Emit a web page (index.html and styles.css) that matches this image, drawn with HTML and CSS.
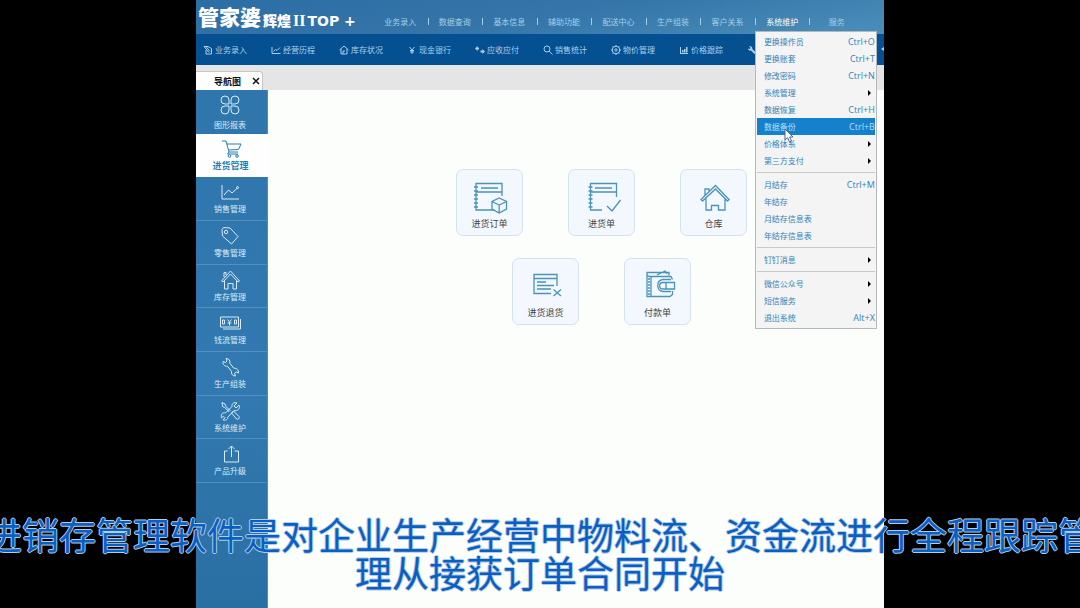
FILE: index.html
```html
<!DOCTYPE html>
<html lang="zh-CN">
<head>
<meta charset="utf-8">
<title>管家婆辉煌II TOP+</title>
<link rel="stylesheet" href="styles.css">
</head>
<body>
<div class="stage">
  <div class="app">
    <header class="header">
      <h1 class="logo"><span class="logo-main">管家婆</span><span class="logo-sub">辉煌</span><span class="logo-num">II</span><span class="logo-top">TOP +</span></h1>
      <nav class="topnav">
        <div class="topnav-item"><button>业务录入</button></div>
        <div class="topnav-item"><button>数据查询</button></div>
        <div class="topnav-item"><button>基本信息</button></div>
        <div class="topnav-item"><button>辅助功能</button></div>
        <div class="topnav-item"><button>配送中心</button></div>
        <div class="topnav-item"><button>生产组装</button></div>
        <div class="topnav-item"><button>客户关系</button></div>
        <div class="topnav-item current"><button>系统维护</button>
          <div class="menu">
            <div class="menu-group">
              <button class="menu-item">更换操作员<kbd>Ctrl+O</kbd></button>
              <button class="menu-item">更换账套<kbd>Ctrl+T</kbd></button>
              <button class="menu-item">修改密码<kbd>Ctrl+N</kbd></button>
              <button class="menu-item more">系统管理</button>
              <button class="menu-item">数据恢复<kbd>Ctrl+H</kbd></button>
              <button class="menu-item selected">数据备份<kbd>Ctrl+B</kbd></button>
              <button class="menu-item more">价格体系</button>
              <button class="menu-item more">第三方支付</button>
            </div>
            <div class="menu-group">
              <button class="menu-item">月结存<kbd>Ctrl+M</kbd></button>
              <button class="menu-item">年结存</button>
              <button class="menu-item">月结存信息表</button>
              <button class="menu-item">年结存信息表</button>
            </div>
            <div class="menu-group">
              <button class="menu-item more">钉钉消息</button>
            </div>
            <div class="menu-group">
              <button class="menu-item more">微信公众号</button>
              <button class="menu-item more">短信服务</button>
              <button class="menu-item">退出系统<kbd>Alt+X</kbd></button>
            </div>
            <svg class="cursor" viewBox="0 0 10 15"><path d="M1 1v11l2.600-2.400L5.500 14l2-.9-1.900-4.100H9z" fill="#fff" stroke="#4a6a88" stroke-width="1"/></svg>
          </div>
        </div>
        <div class="topnav-item"><button>服务</button></div>
      </nav>
    </header>

    <div class="toolbar">
      <button class="tool"><svg viewBox="0 0 10 10"><path d="M1 1.500h4l3.500 2v5.500H3V5M1 1.500l5 6M3 1.500l4 5"/></svg>业务录入</button>
      <button class="tool"><svg viewBox="0 0 10 10"><path d="M1 2v6.500h8.500M2.500 6.500l2-2 1.500 1 3-3"/></svg>经营历程</button>
      <button class="tool"><svg viewBox="0 0 10 10"><path d="M0.500 5L5 1l4.500 4M2 4v5h6V4M4 9V6h2"/></svg>库存状况</button>
      <button class="tool"><svg viewBox="0 0 10 10"><path d="M2.500 2L5 5l2.500-3M5 5v4M3 5.500h4M3 7h4"/></svg>现金银行</button>
      <button class="tool"><svg viewBox="0 0 10 10"><path class="solid" d="M0 3.500L2.500 1v1.500H4v2H2.500V6zM10 6.500L7.500 4v1.500H5.500v2h2V9z"/></svg>应收应付</button>
      <button class="tool"><svg viewBox="0 0 10 10"><circle cx="4" cy="4" r="3"/><path d="M6.200 6.200L9.500 9.500"/></svg>销售统计</button>
      <button class="tool"><svg viewBox="0 0 10 10"><circle cx="5" cy="5" r="3.800"/><circle cx="5" cy="5" r="1.200"/><path d="M5 0v1.500M5 8.500V10M0 5h1.500M8.500 5H10M1.500 1.500l1 1M7.500 7.500l1 1M1.500 8.500l1-1M7.500 2.500l1-1"/></svg>物价管理</button>
      <button class="tool"><svg viewBox="0 0 10 10"><path class="solid" d="M1 2h1v6h7v1H1zM3 5h1.500v2.500H3zM5 4h1.500v3.500H5zM7 2h1.500v5.500H7z"/></svg>价格跟踪</button>
      <button class="tool" aria-label="工具"><svg viewBox="0 0 10 10"><path class="solid" d="M1 3.500l2 .5.500-1.500L2 1.500c2-.8 3.800.5 3.300 2.500L9 7.500 7.500 9 4 5.500C2.500 6 1 5 1 3.500z"/></svg></button>
      <button class="tool tool-end" aria-label="更多"><svg viewBox="0 0 10 10"><path class="solid" d="M0 4l3-2v4z"/></svg></button>
    </div>

    <div class="tabs">
      <div class="tab"><span>导航图</span><button class="tab-close" aria-label="关闭"><svg viewBox="0 0 8 8"><path d="M1 1l6 6M7 1L1 7"/></svg></button></div>
    </div>

    <div class="body">
      <nav class="sidebar">
        <div class="side-list">
        <button class="side first"><svg viewBox="0 0 22 22"><path d="M10 10H6a4 4 0 1 1 4-4zM12 10V6a4 4 0 1 1 4 4zM10 12v4a4 4 0 1 1-4-4zM12 12h4a4 4 0 1 1-4 4z"/></svg>图形报表</button>
        <button class="side active"><svg viewBox="0 0 22 22"><path d="M2 3h4l3 11h9M6.500 6H21l-2.500 5.500-10 .5M9 14l-1.500 2H18"/><circle cx="9.500" cy="18" r="1.300"/><circle cx="17" cy="18" r="1.300"/></svg>进货管理</button>
        <button class="side"><svg viewBox="0 0 22 22"><path d="M3 4v14h17M5 14l4.500-5 3.500 3 5.500-5"/><circle cx="18.500" cy="6.500" r="1"/></svg>销售管理</button>
        <button class="side"><svg viewBox="0 0 22 22"><path d="M3 4.500l1.500-2L11 3l8 8.500-6.500 7.500L3.500 11z"/><circle cx="7" cy="7" r="1.700"/></svg>零售管理</button>
        <button class="side"><svg viewBox="0 0 22 22"><path d="M2.500 12L11.500 2l9 10-1.500 1-7.500-8L4 13zM5.500 11.500V20H9v-5.500h5V20h3.500v-8.500M5 8V3.500h2V6"/></svg>库存管理</button>
        <button class="side"><svg viewBox="0 0 22 22"><path d="M1.500 5h18v10h-18zM4 17h17.500V7M3.500 8h2v4h-2zM15.500 8h2v4h-2z"/><path d="M8.500 7.500l2 2.500 2-2.500M10.500 10v3.500M8.500 11h4"/></svg>钱流管理</button>
        <button class="side"><svg viewBox="0 0 22 22"><path d="M4 5.500l2.500 1 1.500-1.500L7 2.500c3 0 4.500 2 3.800 4.700l4 5C17.500 12 20 14 19.500 17l-2.300-1-1.700 1.500 1 2.500c-3 0-4.600-2-4-4.600l-4-5.100C5.500 10.500 3.500 8.500 4 5.500z"/></svg>生产组装</button>
        <button class="side"><svg viewBox="0 0 22 22"><path d="M3 2.500l3 1.500 1 2.500 4 4-1 1-4.300-4L3.500 6.500zM12.500 13l2-2 5.500 5.500c1 2-1 3.500-2.500 2.500zM18 3l-3 3 2 2 3-3c1.500 3.500-1.500 6.500-5 5.500l-6.500 7c1 2-2.500 3.500-4.500 2.300l2-2-1.500-1.500-2 1.500C1.500 14 4 12 6.500 13l6.500-6.500C12.500 3.500 15 2 18 3z"/></svg>系统维护</button>
        <button class="side"><svg viewBox="0 0 22 22"><path d="M8.500 8H5.500v11h14V8h-4M12.500 14V3M9.500 6l3-3 3 3"/></svg>产品升级</button>
        </div>
      </nav>

      <main class="content">
        <div class="cards">
          <div class="card-row">
            <button class="card"><svg viewBox="0 0 67 47"><path d="M46 26V13.500H20V40h18.500M20 22h26M25 18h17M18 17h4M18 21h4M18 25h4M18 29h4M18 33h4M18 37h4"/><path d="M43.200 28l7.300 3.500v7.500l-7.300 4-7.200-4v-7.500zM36 31.500l7.200 3.500 7.300-3.500M43.200 35v8"/></svg>进货订单</button>
            <button class="card"><svg viewBox="0 0 67 47"><path d="M48.500 27V13.500h-26V40H34M22.500 22h26M27 18h17M20.500 17h4M20.500 21h4M20.500 25h4M20.500 29h4M20.500 33h4M20.500 37h4"/><path d="M39 36l5 5 8.500-11"/></svg>进货单</button>
            <button class="card"><svg viewBox="0 0 67 47"><path d="M21 29.500L35.500 15.500 49 29.500l-1.500 1.500-12-12-13 12zM26 28.500V40h5.500v-4.500h7V40H45V28.500M25 25v-6h4v3"/></svg>仓库</button>
          </div>
          <div class="card-row">
            <button class="card"><svg viewBox="0 0 67 47"><path d="M45 27V15.500H22v19h17M22 19.500h23M25 23h9M25 26.500h17M25 30h14M41.500 30.500l7.500 6.500M49 30.500L41.500 37"/></svg>进货退货</button>
            <button class="card"><svg viewBox="0 0 67 47"><path d="M23 14v23.500h23l2.500-2V32M48.500 20.500L47 17.500H25L23 16v-2.500h22v3M27 18v19M24 20h2M24 23h2M24 26h2M24 29h2M24 32h2M24 35h2M33 16l8-4 2 3"/><path d="M50.500 23.500H39c-4.500 0-4.500 6.500 0 6.500h11.500zM47 20.500h-8c-7 1-7 11 0 12h8M42 23.500V30"/></svg>付款单</button>
          </div>
        </div>
      </main>
    </div>
  </div>
  <p class="caption">进销存管理软件是对企业生产经营中物料流、资金流进行全程跟踪管<br>理从接获订单合同开始</p>
</div>
</body>
</html>
```

FILE: styles.css
```css
* { box-sizing: border-box; }

body {
  margin: 0;
  background: #000;
  font-family: "Noto Sans", "Noto Sans CJK SC", sans-serif;
  font-size: 8px;
}

button {
  margin: 0;
  padding: 0;
  border: 0;
  background: none;
  color: inherit;
  font: inherit;
  white-space: nowrap;
}

svg {
  fill: none;
  stroke: currentColor;
  stroke-width: 1;
  flex: none;
}

.solid { fill: currentColor; stroke: none; }

.stage {
  position: relative;
  min-height: 100vh;
  padding: 0 18.150%;
  overflow: hidden;
}

.app {
  display: flex;
  flex-direction: column;
  min-height: 100vh;
  background: #fcfefc;
}

/* Header */
.header {
  display: flex;
  height: 34px;
  padding-right: 20px;
  background: linear-gradient(170deg, #2c6da4 0%, #3575a9 50%, #4a8fba 100%);
}

.logo {
  display: flex;
  flex: 0 0 177px;
  align-items: center;
  margin: 0;
  padding: 4px 0 0 2px;
  color: #fff;
  font-weight: 900;
  line-height: 24px;
  white-space: nowrap;
}

.logo-main { font-size: 21px; padding-bottom: 4px; }
.logo-sub { margin-left: 2px; font-size: 14px; padding-top: 3px; }
.logo-num { margin: 0 2px; padding-top: 3px; font: 700 16px/24px "Liberation Serif", serif; }
.logo-top { padding-top: 3px; font: 700 14px/24px "DejaVu Sans", sans-serif; }

.topnav {
  display: grid;
  flex: 1;
  grid-template-columns: repeat(9, 1fr);
  color: #a3cfe8;
}

.topnav-item {
  position: relative;
  display: flex;
  align-items: center;
  justify-content: center;
  padding-top: 8px;
}

.topnav-item + .topnav-item::before {
  content: "";
  position: absolute;
  left: 0;
  top: 18px;
  width: 1px;
  height: 7px;
  background: #a3cfe8;
}

.current > button { color: #fff; }

/* Drop-down menu */
.menu {
  position: absolute;
  z-index: 2;
  left: 0;
  top: 31px;
  width: 122px;
  padding: 1px 1px 2px;
  border: 1px solid #b4b8bb;
  background: #f4f4f5;
  color: #2f83ba;
}

.menu-group + .menu-group {
  margin-top: 3px;
  padding-top: 3px;
  border-top: 1px solid #c8cacb;
}

.menu-item {
  display: flex;
  align-items: center;
  justify-content: space-between;
  width: 100%;
  height: 17px;
  padding-left: 7px;
}

.menu-item kbd { font: 9px "Open Sans", sans-serif; }

.more::after {
  content: "";
  margin-right: 4px;
  border: 3px solid transparent;
  border-left: 3px solid #000;
  border-right: 0;
}

.selected { background: #1580cb; color: #b9def5; }

.cursor {
  position: absolute;
  left: 28px;
  top: 96px;
  width: 10px;
  height: 15px;
}

/* Toolbar */
.toolbar {
  display: flex;
  height: 31px;
  padding-left: 7px;
  overflow: hidden;
  background: #045091;
  color: #a9d0ea;
}

.tool {
  display: flex;
  flex: 0 0 68px;
  align-items: center;
  gap: 2px;
}

.tool svg { width: 10px; height: 10px; }
.tool-end { flex: 0 0 3px; margin-left: auto; overflow: hidden; }

/* Tabs */
.tabs {
  display: flex;
  align-items: flex-end;
  height: 25px;
  background: #e5e5e6;
}

.tab {
  display: flex;
  align-items: center;
  justify-content: space-between;
  width: 67px;
  height: 19px;
  padding: 0 2px 0 18px;
  border: 1px solid #c3c5c7;
  border-width: 1px 1px 0 0;
  border-radius: 0 4px 0 0;
  background: #fdfefd;
  color: #111;
  font-size: 9px;
  font-weight: 700;
}

.tab-close svg { display: block; width: 8px; height: 8px; stroke-width: 1.5; }

/* Body */
.body { display: flex; flex: 1; }

.sidebar {
  flex: 0 0 72px;
  border-right: 1px solid #4d8dbb;
  background: linear-gradient(#2f76ad, #3179b0 60%, #2a6fa2);
  color: #d8ecf8;
}

.side-list {
  display: grid;
  grid-auto-rows: 1fr;
  height: 393px;
}

.side {
  display: flex;
  flex-direction: column;
  align-items: center;
  padding: 4px 3px 0 0;
  border-bottom: 1px solid #4f90c0;
  line-height: 12px;
}

.side svg { width: 22px; height: 22px; }

.first { gap: 3px; border-bottom: 0; }

.active {
  margin-right: -1px;
  border-bottom: 0;
  background: #fdfefd;
  color: #2a7fb5;
  font-size: 9px;
  font-weight: 700;
}

.content { flex: 1; padding: 79px 0 0 188px; }

.cards {
  display: flex;
  flex-direction: column;
  gap: 22px;
  width: fit-content;
}

.card-row { display: flex; justify-content: center; gap: 45px; }

.card {
  display: flex;
  flex-direction: column;
  align-items: center;
  width: 67px;
  height: 67px;
  border: 1px solid #d3e2ed;
  border-radius: 7px;
  background: #f3f7fe;
  color: #444;
  font-size: 9px;
  line-height: 14px;
}

.card svg { width: 67px; height: 47px; color: #4a94b8; stroke-width: 1.3; }

/* Caption */
.caption {
  position: absolute;
  left: 50%;
  bottom: 17px;
  z-index: 3;
  margin: 0;
  transform: translateX(-50%);
  color: #0a5fc4;
  font: 37px/38px "Noto Sans CJK SC", sans-serif;
  text-align: center;
  text-shadow: 1px 0 0 #b4cde4, -1px 0 0 #b4cde4, 0 1px 0 #b4cde4, 0 -1px 0 #b4cde4;
  white-space: nowrap;
}
```
